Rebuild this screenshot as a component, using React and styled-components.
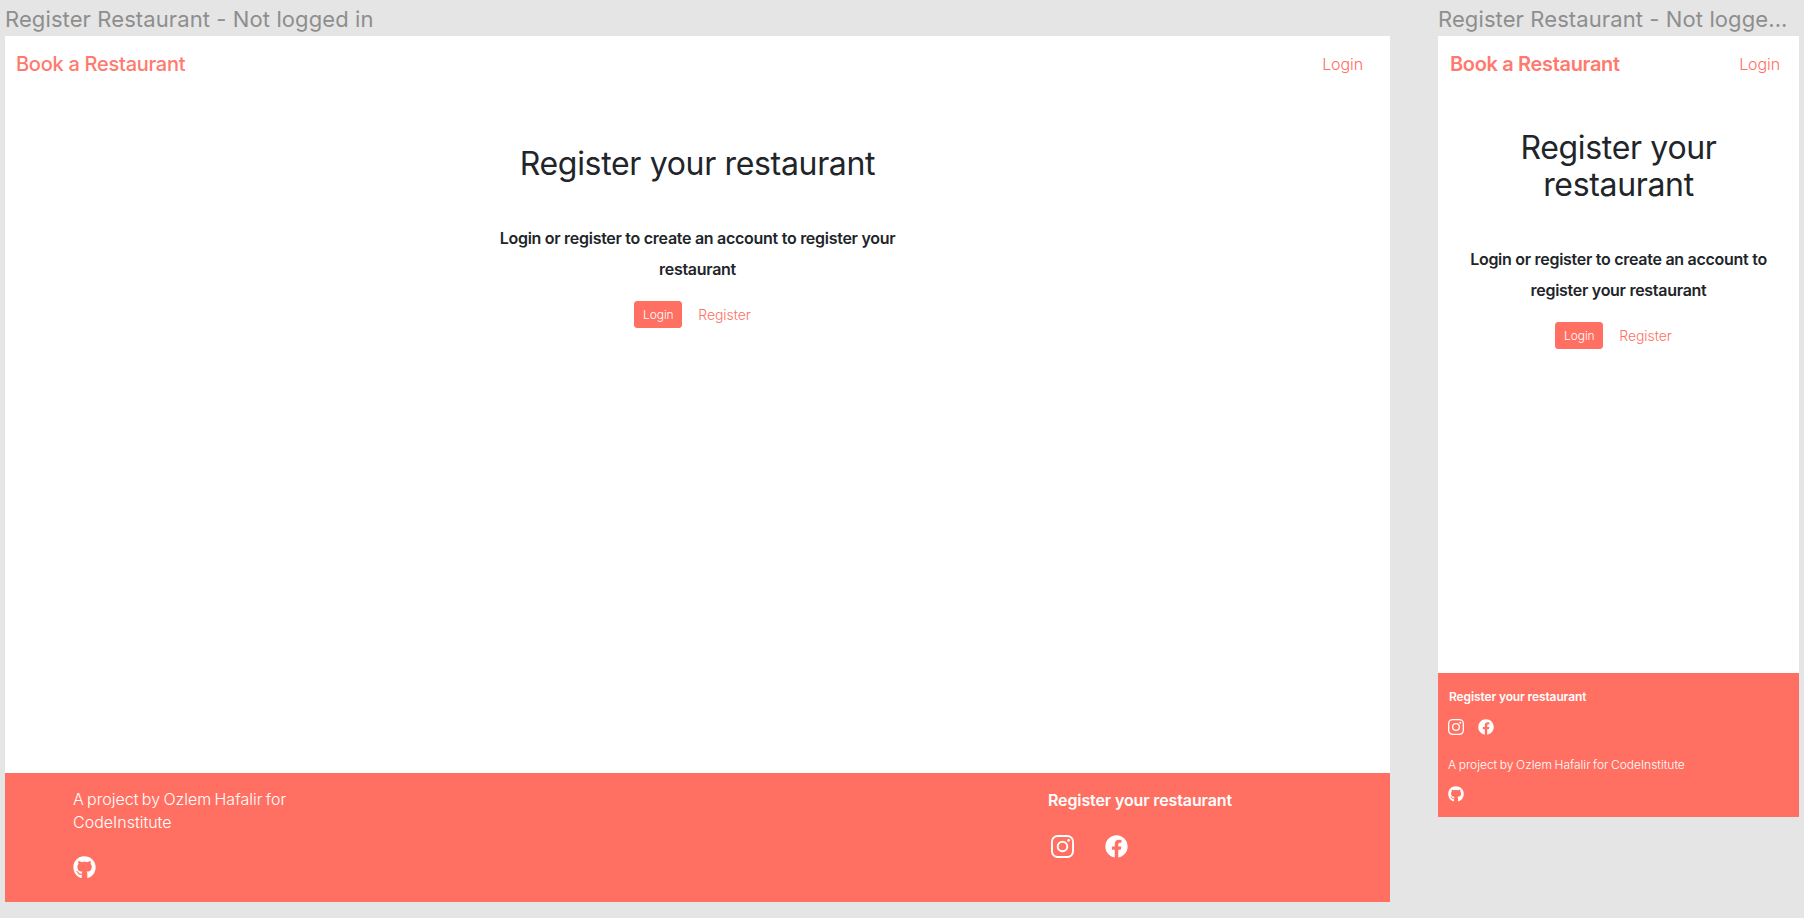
import React from 'react'
import styled, { createGlobalStyle } from 'styled-components'
import { FaGithub, FaFacebook } from 'react-icons/fa'

const coral = '#ff7062'

const GlobalStyle = createGlobalStyle`
  html, body {
    margin: 0;
    height: 100%;
    background: #e5e5e5;
    font-family: "Inter", "Liberation Sans", sans-serif;
  }
`

const Canvas = styled.div`
  width: 1804px;
  height: 918px;
  box-sizing: border-box;
  padding: 8px 0 0 5px;
  display: flex;
  align-items: flex-start;
  gap: 48px;
  overflow: hidden;
`

const Frame = styled.section`
  width: ${(p) => (p.$narrow ? '361px' : '1385px')};
  display: flex;
  flex-direction: column;
`

const FrameTitle = styled.div`
  height: 28px;
  line-height: 22px;
  font-size: 22px;
  letter-spacing: 0.1px;
  color: #8e8e8e;
  white-space: nowrap;
`

const Screen = styled.div`
  height: ${(p) => (p.$narrow ? '781px' : '866px')};
  background: #fff;
  display: flex;
  flex-direction: column;
`

const NavBar = styled.nav`
  height: 56px;
  flex: none;
  box-sizing: border-box;
  padding: ${(p) => (p.$narrow ? '0 19px 0 12px' : '0 27px 0 11px')};
  display: flex;
  align-items: center;
  justify-content: space-between;
`

const Brand = styled.a`
  font-size: 20px;
  line-height: 24px;
  letter-spacing: ${(p) => (p.$narrow ? '-0.34px' : '-0.27px')};
  font-weight: ${(p) => (p.$narrow ? 600 : 500)};
  color: #ff7a6e;
`

const NavLink = styled.a`
  font-size: 16px;
  line-height: 24px;
  font-weight: 350;
  letter-spacing: -0.1px;
  color: ${coral};
`

const Content = styled.main`
  flex: 1;
  display: flex;
  flex-direction: column;
  align-items: center;
  padding-top: ${(p) => (p.$narrow ? '37px' : '53px')};
  text-align: center;
`

const Heading = styled.h1`
  margin: 0 0 41px;
  font-size: 32px;
  line-height: 37px;
  font-weight: 400;
  letter-spacing: -0.33px;
  color: #212529;
  width: ${(p) => (p.$narrow ? '300px' : 'auto')};
`

const Lead = styled.p`
  margin: 0 0 16px;
  width: ${(p) => (p.$narrow ? '320px' : '420px')};
  font-size: 16px;
  line-height: 31px;
  letter-spacing: -0.28px;
  font-weight: 600;
  color: #212529;
`

const Actions = styled.div`
  display: flex;
  align-items: center;
  gap: 16px;
  padding-right: 10px;
`

const LoginButton = styled.button`
  width: 48px;
  height: 27px;
  padding: 0;
  border: 1px solid ${coral};
  border-radius: 3px;
  background: ${coral};
  color: #fff;
  font-family: inherit;
  font-size: 12px;
  font-weight: 300;
  letter-spacing: -0.1px;
`

const RegisterLink = styled.a`
  font-size: 14px;
  line-height: 27px;
  font-weight: 300;
  letter-spacing: -0.08px;
  color: ${coral};
`

const Footer = styled.footer`
  flex: none;
  box-sizing: border-box;
  background: ${coral};
  color: #fff;
  display: flex;
  height: ${(p) => (p.$narrow ? '144px' : '129px')};
  flex-direction: ${(p) => (p.$narrow ? 'column' : 'row')};
  justify-content: ${(p) => (p.$narrow ? 'flex-start' : 'space-between')};
  padding: ${(p) => (p.$narrow ? '16px 10px 0' : '15px 0 0 68px')};
`

const Credit = styled.div`
  width: 240px;
  font-size: 16px;
  line-height: 23px;
  font-weight: 300;
  word-spacing: -1.15px;
`

const SmallCredit = styled.div`
  margin: 22px 0 0;
  font-size: 12px;
  line-height: 15px;
  font-weight: 300;
  word-spacing: -0.77px;
`

const FooterColumn = styled.div`
  width: 342px;
  display: flex;
  flex-direction: column;
  align-items: flex-start;
`

const FooterTitle = styled.div`
  font-size: ${(p) => (p.$narrow ? '12px' : '16px')};
  line-height: ${(p) => (p.$narrow ? '15px' : '24px')};
  margin-left: ${(p) => (p.$narrow ? '1px' : '0')};
  letter-spacing: -0.12px;
  font-weight: 600;
`

const Socials = styled.div`
  display: flex;
  align-items: center;
  gap: ${(p) => (p.$narrow ? '14px' : '31px')};
  margin-top: ${(p) => (p.$narrow ? '15px' : '23px')};
  margin-left: ${(p) => (p.$narrow ? '0' : '3px')};
  font-size: ${(p) => (p.$narrow ? '16px' : '23px')};
  line-height: 0;
`

const GithubLink = styled.a`
  display: block;
  color: #fff;
  margin-top: ${(p) => (p.$narrow ? '14px' : '22px')};
  font-size: ${(p) => (p.$narrow ? '16px' : '23px')};
  line-height: 0;
`

const InstagramIcon = () => (
  <svg width="1em" height="1em" viewBox="0 0 24 24" fill="none" stroke="currentColor" strokeWidth="2">
    <rect x="1" y="1" width="22" height="22" rx="6" />
    <circle cx="12" cy="12" r="5" />
    <circle cx="18.4" cy="5.6" r="1.4" fill="currentColor" stroke="none" />
  </svg>
)

const SocialIcons = ({ narrow }) => (
  <Socials $narrow={narrow}>
    <InstagramIcon />
    <FaFacebook />
  </Socials>
)

const Body = ({ narrow }) => (
  <Content $narrow={narrow}>
    <Heading $narrow={narrow}>Register your restaurant</Heading>
    <Lead $narrow={narrow}>Login or register to create an account to register your restaurant</Lead>
    <Actions>
      <LoginButton>Login</LoginButton>
      <RegisterLink>Register</RegisterLink>
    </Actions>
  </Content>
)

export default function App() {
  return (
    <>
      <GlobalStyle />
      <Canvas>
        <Frame>
          <FrameTitle>Register Restaurant - Not logged in</FrameTitle>
          <Screen>
            <NavBar>
              <Brand>Book a Restaurant</Brand>
              <NavLink>Login</NavLink>
            </NavBar>
            <Body />
            <Footer>
              <div>
                <Credit>A project by Ozlem Hafalir for CodeInstitute</Credit>
                <GithubLink><FaGithub /></GithubLink>
              </div>
              <FooterColumn>
                <FooterTitle>Register your restaurant</FooterTitle>
                <SocialIcons />
              </FooterColumn>
            </Footer>
          </Screen>
        </Frame>
        <Frame $narrow>
          <FrameTitle>Register Restaurant - Not logge...</FrameTitle>
          <Screen $narrow>
            <NavBar $narrow>
              <Brand $narrow>Book a Restaurant</Brand>
              <NavLink>Login</NavLink>
            </NavBar>
            <Body narrow />
            <Footer $narrow>
              <FooterTitle $narrow>Register your restaurant</FooterTitle>
              <SocialIcons narrow />
              <SmallCredit>A project by Ozlem Hafalir for CodeInstitute</SmallCredit>
              <GithubLink $narrow><FaGithub /></GithubLink>
            </Footer>
          </Screen>
        </Frame>
      </Canvas>
    </>
  )
}
